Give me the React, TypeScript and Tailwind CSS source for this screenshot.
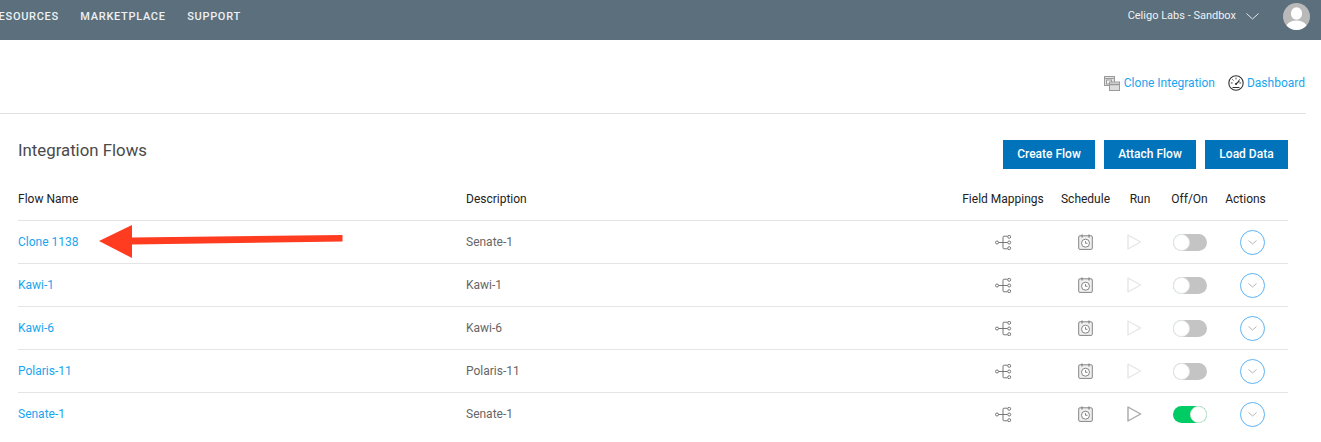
const flows = [
  { name: 'Clone 1138', description: 'Senate-1', enabled: false },
  { name: 'Kawi-1', description: 'Kawi-1', enabled: false },
  { name: 'Kawi-6', description: 'Kawi-6', enabled: false },
  { name: 'Polaris-11', description: 'Polaris-11', enabled: false },
  { name: 'Senate-1', description: 'Senate-1', enabled: true },
]

const rowGrid = 'grid grid-cols-[448px_487px_100px_65px_44px_55px_57px_14px] items-center'

function CloneIcon() {
  return (
    <svg width="16" height="15" viewBox="0 0 16 15" fill="none" stroke="#9a9a9a" strokeWidth="1">
      <rect x="0.5" y="0.5" width="10" height="9" fill="#e4e4e4" />
      <path d="M0.5 2.5h10" />
      <rect x="2.5" y="4" width="5" height="4" fill="#f4f4f4" />
      <rect x="5.5" y="6" width="10" height="8.5" fill="#dcdcdc" />
      <path d="M5.5 8.5h10" strokeWidth="1.5" />
    </svg>
  )
}

function GaugeIcon() {
  return (
    <svg width="16" height="16" viewBox="0 0 16 16" fill="none" stroke="#333" strokeLinecap="round">
      <circle cx="8" cy="8" r="7.2" strokeWidth="1.1" />
      <path d="M8 3v1M3.2 8h1M11.8 8h1M4.6 4.6l.7.7M11.4 4.6l-.7.7" strokeWidth="0.9" />
      <path d="M8 9l3.2-3" strokeWidth="1.1" />
      <circle cx="8" cy="9" r="1" fill="#333" stroke="none" />
      <path d="M5 12.5h6" strokeWidth="1.2" />
    </svg>
  )
}

function MappingIcon() {
  return (
    <svg width="17" height="15" viewBox="0 0 17 15" fill="none" stroke="#777" strokeWidth="1">
      <circle cx="2" cy="7.5" r="1.5" />
      <path d="M3.5 7.5h9M8 7.5V2.2a1 1 0 0 1 1-1h3.5M8 7.5v5.3a1 1 0 0 0 1 1h3.5" />
      <circle cx="14.2" cy="1.8" r="1.5" />
      <circle cx="14.2" cy="7.5" r="1.5" />
      <circle cx="14.2" cy="13.2" r="1.5" />
    </svg>
  )
}

function ScheduleIcon() {
  return (
    <svg width="15" height="16" viewBox="0 0 15 16" fill="none" stroke="#858585" strokeWidth="1">
      <rect x="0.7" y="1.8" width="13.6" height="13.6" rx="1.2" fill="#efefef" />
      <path d="M4 0.5v3M11 0.5v3" strokeWidth="1.3" />
      <circle cx="7.5" cy="9.2" r="4" fill="#fff" />
      <path d="M7.5 7.1v2.2h2" />
    </svg>
  )
}

function RunIcon({ active }: { active: boolean }) {
  return (
    <svg width="15" height="16" viewBox="0 0 15 16" fill="none" stroke={active ? '#a8a8a8' : '#e6e6e6'} strokeWidth="1.4">
      <path d="M1 1v14L13.6 8z" strokeLinejoin="round" />
    </svg>
  )
}

function Toggle({ on }: { on: boolean }) {
  return (
    <div
      className={
        on
          ? 'flex h-[17px] w-[34px] justify-end rounded-full bg-[#00cc66]'
          : 'flex h-[17px] w-[34px] justify-start rounded-full bg-[#c4c4c4]'
      }
    >
      <div className="h-[17px] w-[17px] rounded-full border border-[#dfe8e2] bg-white" />
    </div>
  )
}

function ActionsButton() {
  return (
    <div className="flex h-[25px] w-[25px] items-center justify-center rounded-full border border-[#5cb3f5]">
      <svg width="9" height="5" viewBox="0 0 9 5" fill="none" stroke="#b5b5b5" strokeWidth="1">
        <path d="M0.5 0.5l4 3.5 4-3.5" />
      </svg>
    </div>
  )
}

function Button({ label, width }: { label: string; width: string }) {
  return (
    <button type="button" className={`h-[29px] bg-[#0073bb] pb-[1px] text-[12px] font-medium text-white ${width}`}>
      {label}
    </button>
  )
}

export default function App() {
  return (
    <div className="relative h-[442px] overflow-hidden bg-white font-['Roboto',sans-serif] text-[12px] text-[#333]">
      <header className="flex h-10 items-center justify-between bg-[#5b6f7c] pr-[11px] text-white">
        <nav className="ml-[-9px] flex gap-[21.5px] pb-[6px] text-[11px] font-medium tracking-[0.7px] text-[#eef1f3]">
          <span>RESOURCES</span>
          <span>MARKETPLACE</span>
          <span>SUPPORT</span>
        </nav>
        <div className="flex items-center pb-[10px] pt-[2px]">
          <span className="text-[11px] text-[#f0f2f3]">Celigo Labs - Sandbox</span>
          <svg className="ml-[10px]" width="13" height="7" viewBox="0 0 13 7" fill="none" stroke="#e4e8ea" strokeWidth="1">
            <path d="M0.5 0.5l6 5.5 6-5.5" />
          </svg>
          <svg className="ml-[24px]" width="27" height="27" viewBox="0 0 27 27">
            <clipPath id="avatar">
              <circle cx="13.5" cy="13.5" r="13.5" />
            </clipPath>
            <g clipPath="url(#avatar)">
              <rect width="27" height="27" fill="#b9b9b9" />
              <ellipse cx="13.5" cy="10.5" rx="5.6" ry="6.2" fill="#fff" />
              <ellipse cx="13.5" cy="25" rx="11" ry="7.5" fill="#fff" />
            </g>
          </svg>
        </div>
      </header>

      <div className="flex h-[74px] w-[1306px] items-center justify-end gap-[13px] border-b border-[#e2e2e2] pr-[1px] pt-[13px]">
        <a className="flex items-center gap-[4px] text-[#18a5ef]">
          <CloneIcon />
          Clone Integration
        </a>
        <a className="flex items-center gap-[3px] text-[#18a5ef]">
          <GaugeIcon />
          Dashboard
        </a>
      </div>

      <main className="ml-[18px] w-[1270px]">
        <div className="flex items-center justify-between pt-[26px]">
          <h1 className="pb-[8px] text-[16.8px] leading-[21px] text-[#4a4a4a]">Integration Flows</h1>
          <div className="flex gap-[9px]">
            <Button label="Create Flow" width="w-[92px]" />
            <Button label="Attach Flow" width="w-[92px]" />
            <Button label="Load Data" width="w-[83px]" />
          </div>
        </div>

        <div className={`${rowGrid} mt-[16px] h-[36px] border-b border-[#e4e4e4] pb-[8px] text-[#222] [&>span]:text-center`}>
          <span className="!text-left">Flow Name</span>
          <span className="!text-left">Description</span>
          <span>Field Mappings</span>
          <span>Schedule</span>
          <span>Run</span>
          <span>Off/On</span>
          <span>Actions</span>
        </div>

        {flows.map((flow) => (
          <div key={flow.name} className={`${rowGrid} h-[43px] border-b border-[#e4e4e4] last:border-transparent`}>
            <a className="text-[#18a5ef]">{flow.name}</a>
            <span className="text-[#666]">{flow.description}</span>
            <div className="flex justify-center"><MappingIcon /></div>
            <div className="flex justify-center"><ScheduleIcon /></div>
            <div className="flex justify-center pr-[12px]"><RunIcon active={flow.enabled} /></div>
            <div className="flex justify-center"><Toggle on={flow.enabled} /></div>
            <div className="flex justify-center pl-[14px]"><ActionsButton /></div>
          </div>
        ))}
      </main>

      {/* annotation drawn over the table */}
      <svg className="absolute left-[98px] top-[224px]" width="246" height="36" viewBox="0 0 246 36">
        <path d="M1 17 L34 1 V13.5 L244.5 11 V17.5 L34 20.5 V34 Z" fill="#ff3b20" />
      </svg>
    </div>
  )
}
